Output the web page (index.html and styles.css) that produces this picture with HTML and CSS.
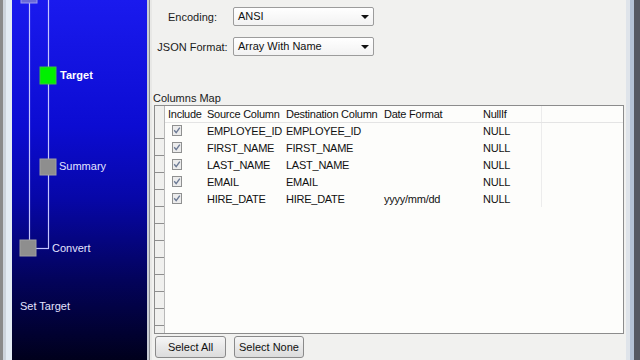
FILE: index.html
```html
<!DOCTYPE html>
<html>
  <head>
    <title>Export Wizard - Set Target</title>
    <link rel="stylesheet" href="styles.css">
  </head>
  <body>
    <div class="window">
      <div class="frame-left"></div>

      <!-- wizard steps -->
      <div class="sidebar">
        <svg class="steps-lines" width="135" height="260" viewBox="0 0 135 260">
          <line x1="17.5" y1="0" x2="17.5" y2="240" stroke="#c4c4ff" stroke-width="1.2" />
          <line x1="36.5" y1="0" x2="36.5" y2="248.5" stroke="#c4c4ff" stroke-width="1.2" />
          <line x1="24" y1="248.5" x2="37" y2="248.5" stroke="#c4c4ff" stroke-width="1.2" />
          <rect x="9" y="-13" width="16" height="16" fill="#6a6ad8" stroke="#9a9af0" />
          <rect x="28" y="67" width="16" height="17" fill="#00f000" stroke="#40c040" />
          <rect x="28" y="159" width="16" height="16" fill="#8e8e8e" stroke="#a0a0a0" />
          <rect x="8" y="240" width="16" height="16" fill="#8e8e8e" stroke="#a0a0a0" />
        </svg>
        <span class="step step-current" style="top: 68px; left: 48px;">Target</span>
        <span class="step" style="top: 159px; left: 47px;">Summary</span>
        <span class="step" style="top: 241px; left: 40px;">Convert</span>
        <p class="page-title">Set Target</p>
      </div>

      <div class="divider"></div>

      <div class="main">
        <div class="form-row">
          <label>Encoding:</label>
          <div class="select">ANSI<span class="arrow"></span></div>
        </div>
        <div class="form-row">
          <label>JSON Format:</label>
          <div class="select">Array With Name<span class="arrow"></span></div>
        </div>

        <p class="section-label">Columns Map</p>
        <div class="columns-map">
          <div class="row-heads">
            <div class="row-heads-top"></div>
            <div class="row-heads-ticks"></div>
          </div>
          <table class="map-table">
            <thead>
              <tr>
                <th class="col-include">Include</th>
                <th class="col-source">Source Column</th>
                <th class="col-dest">Destination Column</th>
                <th class="col-date">Date Format</th>
                <th class="col-null">NullIf</th>
                <th class="col-fill"></th>
              </tr>
            </thead>
            <tbody id="map-body">
              <!-- rows filled by script -->
            </tbody>
          </table>
        </div>

        <div class="buttons">
          <button class="btn btn-all">Select All</button>
          <button class="btn btn-none">Select None</button>
        </div>
      </div>

      <div class="frame-right">
        <div class="frame-right-a"></div>
        <div class="frame-right-b"></div>
        <div class="frame-right-c"></div>
      </div>
    </div>

    <script>
      // columns of the source table
      const columns = [
        { name: "EMPLOYEE_ID", date: "" },
        { name: "FIRST_NAME", date: "" },
        { name: "LAST_NAME", date: "" },
        { name: "EMAIL", date: "" },
        { name: "HIRE_DATE", date: "yyyy/mm/dd" }
      ];

      const checkSvg = `<svg class="check" width="10" height="11" viewBox="0 0 10 11">
          <rect x="0.5" y="0.5" width="9" height="10" fill="#ececec" stroke="#8f9090" />
          <path d="M2.2 5.2 L4.2 7.6 L7.8 2.6" fill="none" stroke="#6c7a94" stroke-width="1.4" />
        </svg>`;

      const body = document.getElementById("map-body");
      columns.forEach(function (col) {
        const tr = document.createElement("tr");
        tr.innerHTML = `
          <td class="col-include">${checkSvg}</td>
          <td>${col.name}</td>
          <td>${col.name}</td>
          <td>${col.date}</td>
          <td class="col-null">NULL</td>
          <td></td>
        `;
        body.appendChild(tr);
      });
    </script>
  </body>
</html>
```

FILE: styles.css
```css
body {
  margin: 0;
  font-family: "Liberation Sans", Arial, sans-serif;
  font-size: 11px;
  background-color: #f1f1ef;
}

.window {
  display: flex;
  width: 640px;
  height: 360px;
  overflow: hidden;
}

.frame-left {
  width: 12px;
  background: linear-gradient(to right, #8a8a8a 0 3px, #cdd4dc 3px 6px, #e4ecf4 6px 12px);
}

/* wizard step panel */
.sidebar {
  position: relative;
  width: 135px;
  background: linear-gradient(to bottom, #1a1aee 0%, #0c0cd2 35%, #0707a8 55%, #03035a 78%, #00001c 100%);
  color: #e4e4ff;
}

.steps-lines {
  position: absolute;
  top: 0;
  left: 0;
}

.step {
  position: absolute;
  font-size: 11px;
  line-height: 14px;
}

.step-current {
  font-weight: bold;
  color: #ffffff;
}

.page-title {
  position: absolute;
  top: 299px;
  left: 8px;
  margin: 0;
  line-height: 14px;
}

.divider {
  width: 5px;
  background: linear-gradient(to right, #c8ccd4 0 2px, #8a8c90 2px 3px, #e8e8e6 3px 5px);
}

/* main form */
.main {
  width: 474px;
  padding-top: 7px;
}

.form-row {
  display: grid;
  grid-template-columns: 81px 141px;
  align-items: center;
  margin-bottom: 11px;
}

.form-row label {
  text-align: center;
  color: #1a1a1a;
}

.select {
  position: relative;
  height: 17px;
  line-height: 17px;
  padding-left: 4px;
  background: linear-gradient(to bottom, #ffffff, #f2f2f2);
  border: 1px solid #9c9c9c;
  border-radius: 2px;
  color: #111;
}

.arrow {
  position: absolute;
  right: 4px;
  top: 7px;
  width: 0;
  height: 0;
  border-left: 4px solid transparent;
  border-right: 4px solid transparent;
  border-top: 4px solid #111;
}

.section-label {
  margin: 36px 0 0 1px;
  line-height: 13px;
  color: #1a1a1a;
}

.columns-map {
  display: flex;
  margin-left: 2px;
  width: 468px;
  height: 227px;
  border: 1px solid #8c8c8c;
  background-color: #fdfdfb;
}

.row-heads {
  display: flex;
  flex-direction: column;
  width: 9px;
  border-right: 1px solid #b8b8b8;
  background-color: #f0f0ee;
}

.row-heads-top {
  height: 16px;
}

.row-heads-ticks {
  flex: 1;
  background: repeating-linear-gradient(to bottom, transparent 0 16px, #8e8e8e 16px 17px);
}

.map-table {
  border-collapse: collapse;
  table-layout: fixed;
  align-self: flex-start;
  width: 458px;
  letter-spacing: -0.25px;
}

.map-table th,
.map-table td {
  box-sizing: border-box;
  padding: 0 0 0 3px;
  color: #111;
  white-space: nowrap;
}

.map-table th {
  height: 16px;
  font-weight: normal;
  text-align: left;
  border-bottom: 1px solid #e4e4e4;
}

.map-table td {
  height: 17px;
}

.col-include { width: 39px; }
.col-source { width: 79px; }
.col-dest { width: 98px; }
.col-date { width: 99px; }
.col-null { width: 61px; border-right: 1px solid #ececec; }

td.col-include {
  padding-left: 7px;
}

.check {
  display: block;
}

.buttons {
  display: flex;
  gap: 8px;
  margin: 2px 0 0 3px;
}

.btn {
  height: 22px;
  padding: 0;
  font-family: "Liberation Sans", Arial, sans-serif;
  font-size: 11px;
  color: #111;
  background: linear-gradient(to bottom, #f6f6f6 0%, #e8e8e8 50%, #dcdcdc 100%);
  border: 1px solid #8a8a8a;
  border-radius: 3px;
}

.btn-all { width: 71px; }
.btn-none { width: 70px; }

.frame-right {
  display: flex;
  flex: 1;
}

.frame-right-a {
  width: 4px;
  background-color: #dfe4ea;
}

.frame-right-b {
  width: 4px;
  background-color: #b4c4d6;
}

.frame-right-c {
  flex: 1;
  background-color: #555a62;
}
```
